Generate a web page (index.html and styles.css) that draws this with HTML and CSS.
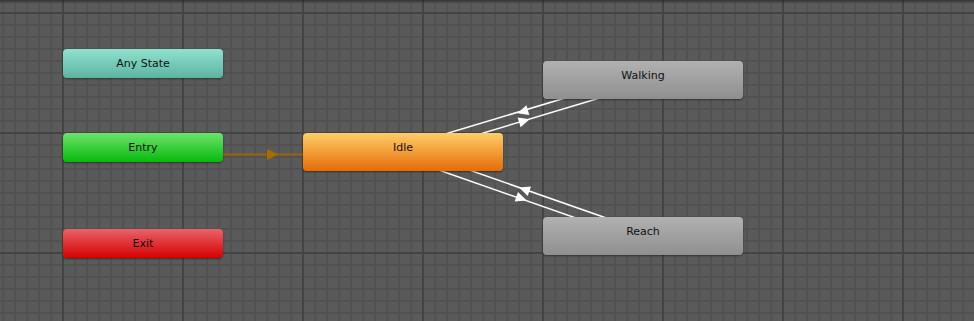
FILE: index.html
```html
<!DOCTYPE html>
<html>
<head>
<meta charset="utf-8">
<link rel="stylesheet" href="styles.css">
</head>
<body>
<div class="canvas">
  <div class="shade"></div>
  <svg class="links" width="974" height="321" viewBox="0 0 974 321">
    <!-- Entry -> Idle -->
    <line x1="142" y1="154.5" x2="402" y2="154.5" class="entry-link"/>
    <polygon points="278,154.5 267,149 267,160" class="entry-arrow"/>
    <!-- Idle <-> Walking -->
    <line x1="401.07" y1="147.2" x2="641.07" y2="75.2" class="link"/>
    <line x1="403.9" y1="156.8" x2="643.9" y2="84.8" class="link"/>
    <polygon points="-5.5,0 5.5,-5 5.5,5" class="arrow" transform="translate(522.6 111.7) rotate(-16.7)"/>
    <polygon points="5.5,0 -5.5,-5 -5.5,5" class="arrow" transform="translate(524.4 120.8) rotate(-16.7)"/>
    <!-- Idle <-> Reach -->
    <line x1="400.85" y1="156.72" x2="640.85" y2="240.72" class="link"/>
    <line x1="404.15" y1="147.28" x2="644.15" y2="231.28" class="link"/>
    <polygon points="5.5,0 -5.5,-5 -5.5,5" class="arrow" transform="translate(521.5 198.6) rotate(19.3)"/>
    <polygon points="-5.5,0 5.5,-5 5.5,5" class="arrow" transform="translate(524.2 189.4) rotate(19.3)"/>
  </svg>
  <div class="node small any" style="left:63px;top:49px">Any State</div>
  <div class="node small entry" style="left:63px;top:133px">Entry</div>
  <div class="node small exit" style="left:63px;top:229px">Exit</div>
  <div class="node tall idle" style="left:303px;top:133px">Idle</div>
  <div class="node tall gray" style="left:543px;top:61px">Walking</div>
  <div class="node tall gray" style="left:543px;top:217px">Reach</div>
</div>
</body>
</html>
```
FILE: styles.css
```css
html, body {
  margin: 0;
  padding: 0;
  background: #595959;
}
.canvas {
  position: relative;
  width: 974px;
  height: 321px;
  overflow: hidden;
  background-color: #5a5a5a;
  background-image:
    linear-gradient(to right, #444444 0, #444444 2px, transparent 2px),
    linear-gradient(to bottom, #444444 0, #444444 2px, transparent 2px),
    linear-gradient(to right, #525252 0, #525252 2px, transparent 2px),
    linear-gradient(to bottom, #525252 0, #525252 2px, transparent 2px);
  background-size: 120px 120px, 120px 120px, 12px 12px, 12px 12px;
  background-position: 62px 0, 0 12px, 2px 0, 0 0;
  font-family: "DejaVu Sans", Verdana, sans-serif;
  font-size: 11px;
  color: #111;
}
.shade {
  position: absolute;
  left: 0; top: 0; right: 0;
  height: 4px;
  background: linear-gradient(to bottom, rgba(0,0,0,0.35), rgba(0,0,0,0));
}
.links {
  position: absolute;
  left: 0; top: 0;
}
.link {
  stroke: #ffffff;
  stroke-width: 1.5;
}
.arrow {
  fill: #ffffff;
}
.entry-link {
  stroke: #98620a;
  stroke-width: 2;
}
.entry-arrow {
  fill: #a86c00;
}
.node {
  position: absolute;
  box-sizing: border-box;
  border-radius: 4px;
  text-align: center;
  line-height: 30px;
  box-shadow: 0 1px 2px rgba(0,0,0,0.45);
}
.small {
  width: 160px;
  height: 29px;
}
.tall {
  width: 200px;
  height: 38px;
}
.any {
  background: linear-gradient(to bottom, #8fe2ce, #5db3a2);
}
.entry {
  background: linear-gradient(to bottom, #6de46c, #06b90c);
}
.exit {
  background: linear-gradient(to bottom, #ea636a, #d40000);
}
.idle {
  background: linear-gradient(to bottom, #ffcd68, #e46c08);
}
.gray {
  background: linear-gradient(to bottom, #b1b1b1, #8f8f8f);
}
```
